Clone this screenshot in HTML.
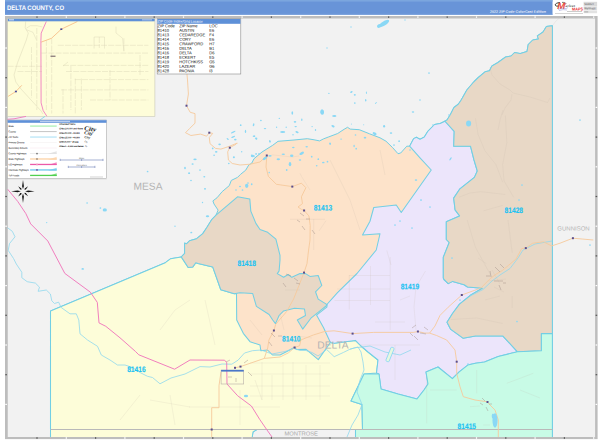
<!DOCTYPE html>
<html><head><meta charset="utf-8"><style>
html,body{margin:0;padding:0;background:#fff;width:600px;height:440px;overflow:hidden}
svg{position:absolute;left:0;top:0;font-family:"Liberation Sans",sans-serif}
text{text-rendering:geometricPrecision}
</style></head><body>
<svg width="600" height="440" viewBox="0 0 600 440">
<rect x="5" y="16" width="592" height="423" fill="#bdbdbd"/>
<rect x="7.5" y="18.3" width="588" height="418.7" fill="#f2f2f2"/>
<path d="M552.4,25.7 L552.4,438.5 L355.5,438.5 L355.5,429.5 L257,429.5 L253,432 L252,438.5 L50.5,438.5 L50.5,311 L165.3,262.7 L170.7,258.7 L181.2,257 L184.6,253.4 L184.6,243.1 L186.4,243.8 L189.4,240.8 L196.6,238.7 L202.7,233.6 L206.8,227.5 L211.9,219.3 L216,215.2 L218.1,210.1 L214,204 L212.9,200.9 L217,197.8 L222.1,191.7 L229.3,185.6 L231.3,180.4 L237.5,177.4 L240.6,174.3 L245.7,170.2 L248.7,165.1 L251.8,163.1 L254,158.7 L262,152 L272.7,145.3 L278,141.3 L294,140 L307.3,138.7 L314.1,139.8 L319.6,140.9 L323.7,138.8 L328.2,137.1 L337.7,133.5 L341,131.3 L344.1,129.3 L347.5,127.3 L350.2,129.1 L359.3,129.7 L369.5,133.8 L380,137.8 L386,141.2 L392.7,147.7 L398,153.7 L400.7,153 L406.8,146.2 L409.6,146.2 L413.7,138.6 L416.4,137.3 L420,139.3 L424.3,137 L427.7,131.4 L434.5,124.5 L440.2,123.4 L444.8,121.1 L447,120 L450.5,114.3 L453.9,107.5 L458.4,104 L460.7,100.7 L462.3,98 L466.8,90 L473.6,82 L478.2,77.5 L485,71.8 L489.5,70.7 L491.8,66 L497.5,62.7 L505.5,57 L511,56 L514.5,52.5 L520.2,53.6 L527,51.4 L528.2,44.5 L532.7,40 L538.4,38.9 L537.3,35.9 L543,32 L546.4,26.4 Z" fill="#fde3ca" stroke="#72cfe4" stroke-width="1"/>
<path d="M50.5,438.5 L50.5,311 L165.3,262.7 L170.7,258.7 L181.2,257 L188.2,267.5 L192.8,266.9 L195.8,262.8 L198,263.6 L212.7,266.9 L220.8,289.7 L234.3,293.8 L236.5,293.6 L236.7,320 L243.3,333.3 L250,341.7 L260,345 L260.8,350.8 L267.5,350 L272.5,355 L280,355 L288.3,350.8 L294.2,347.5 L296.7,349.6 L305.8,349.2 L318.3,359.6 L330.4,342.5 L334.2,343.3 L343.3,342 L355.4,340.4 L361,346 L368,352 L378,360 L376.5,373 L364,374 L351,401 L362,404.5 L362.5,429.5 L257,429.5 L253,432 L252,438.5 Z" fill="#fdfdd9" stroke="#72cfe4" stroke-width="1.05" stroke-linejoin="round"/>
<path d="M181.2,256.8 L184.6,253.4 L184.6,243.1 L186.4,243.8 L189.4,240.8 L196.6,238.7 L202.7,233.6 L206.8,227.5 L211.9,219.3 L216,215.2 L237.5,196.8 L249.8,198.9 L250.8,211.1 L255.9,223.4 L260,229.5 L267.7,232.3 L275.9,239.1 L280,255.4 L280,260 L279.1,270.9 L277.3,273.6 L283.6,277.3 L288.2,274.5 L291.8,277.3 L300,273.6 L305.5,273.6 L310,276.4 L318.2,275.5 L321.8,285.5 L315.5,291.8 L318.2,299.1 L325.5,303.6 L327.3,305 L320,310.9 L310.9,318.2 L302.7,329.1 L297.3,320 L305.5,315.5 L304.5,309.1 L294.5,308.2 L283.6,310.9 L279.1,315.5 L275.5,323.6 L272.7,320 L269.1,314.5 L256.4,306.4 L252.7,293.6 L240,292.7 L234.3,293.8 L220.8,289.7 L212.7,266.9 L198,263.6 L195.8,262.8 L192.8,266.9 L188.2,267.5 Z" fill="#e8d8c6" stroke="#72cfe4" stroke-width="1.05" stroke-linejoin="round"/>
<path d="M409.6,146.2 L413.7,138.6 L416.4,137.3 L420,139.3 L424.3,137 L427.7,131.4 L434.5,124.5 L440.2,123.4 L445.5,121.1 L454.2,131.4 L453.7,146.2 L470.5,146.2 L474,160 L477.3,171 L474.4,177.4 L459.6,189.2 L453.7,198.1 L455.1,209.9 L459.6,215.9 L446.3,221.8 L446.3,239.5 L449.2,242.5 L443.3,257.3 L443.3,278 L444,279.5 L448.2,283.6 L452.7,281.4 L464.1,284.8 L467.5,287 L482.3,288.2 L470.9,295 L459.5,304.1 L452.7,313.2 L447,322.3 L450.5,329.1 L463,338.2 L475.5,335.9 L502.7,335.9 L517.5,351.8 L498.2,356.4 L484.5,362 L475.5,363.2 L467.8,365.1 L459.2,371.9 L452.4,378.7 L438,367 L426,372 L428,384 L424,390 L417,399 L398,394 L381,389 L379,374 L376.5,373 L378,360 L368,352 L361,346 L355.4,340.4 L343.3,342 L334.2,343.3 L330.4,342.5 L323.6,327.8 L316.5,315.1 L326.8,307.2 L327.3,304 L337.5,292.6 L357,273.5 L376.25,250 L380,233.75 L362.5,235 L370,221.25 L373.75,207.5 L396.25,205 L401.25,212.5 L431.25,170 L420,157.8 Z" fill="#ece5fb" stroke="#72cfe4" stroke-width="1.05" stroke-linejoin="round"/>
<path d="M444.8,121.1 L447,120 L450.5,114.3 L453.9,107.5 L458.4,104 L460.7,100.7 L462.3,98 L466.8,90 L473.6,82 L478.2,77.5 L485,71.8 L489.5,70.7 L491.8,66 L497.5,62.7 L505.5,57 L511,56 L514.5,52.5 L520.2,53.6 L527,51.4 L528.2,44.5 L532.7,40 L538.4,38.9 L537.3,35.9 L543,32 L546.4,26.4 L552.4,25.7 L552.4,333.6 L541.4,333.6 L541.4,350.7 L517.5,351.8 L502.7,335.9 L475.5,335.9 L463,338.2 L450.5,329.1 L447,322.3 L452.7,313.2 L459.5,304.1 L470.9,295 L482.3,288.2 L467.5,287 L464.1,284.8 L452.7,281.4 L448.2,283.6 L444,279.5 L443.3,278 L443.3,257.3 L449.2,242.5 L446.3,239.5 L446.3,221.8 L459.6,215.9 L455.1,209.9 L453.7,198.1 L459.6,189.2 L474.4,177.4 L477.3,171 L474,160 L470.5,146.2 L453.7,146.2 L454.2,131.4 Z" fill="#e8d8c6" stroke="#72cfe4" stroke-width="1.05" stroke-linejoin="round"/>
<path d="M552.4,333.6 L552.4,438.5 L355.5,438.5 L355.5,429.5 L362.5,429.5 L362,404.5 L351,401 L364,374 L379,374 L381,389 L398,394 L417,399 L424,390 L428,384 L426,372 L438,367 L452.4,378.7 L459.2,371.9 L467.8,365.1 L475.5,363.2 L484.5,362 L498.2,356.4 L517.5,351.8 L541.4,350.7 L541.4,333.6 Z" fill="#c8fbe6" stroke="#72cfe4" stroke-width="1.05" stroke-linejoin="round"/>
<line x1="50.5" y1="429.5" x2="552.4" y2="429.5" stroke="#b9b9b9" stroke-width="1"/>
<path d="M6.8,227.2 L12.3,231.3 L15,236.8 L9.5,243.6 L8.2,250.4 L13.6,258.6 L16.3,264 L21.8,272.2 L21.8,277.7 L27.2,281.7 L35.4,283.1 L39.5,287.2 L38.1,291.3 L46.3,290 L50.4,294 L51.8,300.8 L54.5,303.5 L58.6,302.2 L61.3,307.6 L70,313.8 L76.3,313.8 L78.8,320 L80,333.8 L87.5,340 L97.5,346.3 L101.3,355 L110,360 L117.5,365 L125,365 L132.5,367.5 L140,372.5 L147.5,376.3 L152.5,377.5 L160,383.8 L171,378 L185,374 L200,366.6 L210,367 L222,364 L231.8,364.2 L238,360.2 L244.5,353 L252.5,350.7 L261.2,350 L272,354 L285,351.5 L294,348.5 L300,350.5 L306,350.5 L312,352.5 L318,356 L326.7,349.5 L334.2,356.7 L343.3,352.5 L350,349.2 L355,347.7 L362,347 L370,346 L385,352 L400,355 L411,350" fill="none" stroke="#8fd8ee" stroke-width="0.8"/>
<path d="M470,296 L483,289.5 L492,281 L500,275 L510,268.5 L518,258 L523,250 L535,244 L552,241" fill="none" stroke="#8fd8ee" stroke-width="0.8"/>
<path d="M350,349.2 L358,347 L361,352 L363,362 L364,370 L360,380 L357,392 L362,404.5 L358,415 L352,425 L347,437" fill="none" stroke="#8fd8ee" stroke-width="0.8"/>
<path d="M271.8,154.8 L292.3,157 L299,156" fill="none" stroke="#bfb0a8" stroke-width="0.4" opacity="0.4"/>
<path d="M490,67.5 L492,75 L500,84 L510,90 L513,93 L530,97 L547.5,102.5 L550,98" fill="none" stroke="#bfb0a8" stroke-width="0.4" opacity="0.4"/>
<path d="M512,94 L511,100 L505,108 L502,115" fill="none" stroke="#bfb0a8" stroke-width="0.4" opacity="0.4"/>
<path d="M503,110 L500,120 L498,130" fill="none" stroke="#bfb0a8" stroke-width="0.4" opacity="0.4"/>
<path d="M505.4,115.4 L506.8,142.7 L502.7,164.5 L504,180.8 L513.6,197.2" fill="none" stroke="#bfb0a8" stroke-width="0.4" opacity="0.4"/>
<path d="M475.4,118.2 L478.1,134.5 L485,150.9 L495.9,164.5 L502.7,182.2" fill="none" stroke="#bfb0a8" stroke-width="0.4" opacity="0.4"/>
<path d="M459,197.2 L470,193 L480.9,191.7 L505.4,194.5" fill="none" stroke="#bfb0a8" stroke-width="0.4" opacity="0.4"/>
<path d="M483.6,210.8 L502.7,205.4" fill="none" stroke="#bfb0a8" stroke-width="0.4" opacity="0.4"/>
<path d="M467.2,220 L475.4,247.2 L491.8,277.2" fill="none" stroke="#bfb0a8" stroke-width="0.4" opacity="0.4"/>
<path d="M508,220 L512.2,252.7" fill="none" stroke="#bfb0a8" stroke-width="0.4" opacity="0.4"/>
<path d="M478,258 L486.3,263.6" fill="none" stroke="#bfb0a8" stroke-width="0.4" opacity="0.4"/>
<path d="M512.2,296 L512.2,308" fill="none" stroke="#bfb0a8" stroke-width="0.4" opacity="0.4"/>
<path d="M451,319.5 L476.8,318 L502.7,323.5" fill="none" stroke="#bfb0a8" stroke-width="0.4" opacity="0.4"/>
<path d="M492,270 L500,284" fill="none" stroke="#bfb0a8" stroke-width="0.4" opacity="0.4"/>
<path d="M488,281 L506,279" fill="none" stroke="#bfb0a8" stroke-width="0.4" opacity="0.4"/>
<path d="M494,287 L504,292" fill="none" stroke="#bfb0a8" stroke-width="0.4" opacity="0.4"/>
<path d="M485,300 L500,296" fill="none" stroke="#bfb0a8" stroke-width="0.4" opacity="0.4"/>
<path d="M390.2,257 L390.2,330" fill="none" stroke="#bfb0a8" stroke-width="0.4" opacity="0.4"/>
<path d="M370.5,266 L370.5,305" fill="none" stroke="#bfb0a8" stroke-width="0.4" opacity="0.4"/>
<path d="M349,275.5 L390,275.5" fill="none" stroke="#bfb0a8" stroke-width="0.4" opacity="0.4"/>
<path d="M337,289 L390,289" fill="none" stroke="#bfb0a8" stroke-width="0.4" opacity="0.4"/>
<path d="M334.5,300.5 L390,300.5" fill="none" stroke="#bfb0a8" stroke-width="0.4" opacity="0.4"/>
<path d="M349.3,275 L349.3,309.5" fill="none" stroke="#bfb0a8" stroke-width="0.4" opacity="0.4"/>
<path d="M386.8,250.5 L391,265" fill="none" stroke="#bfb0a8" stroke-width="0.4" opacity="0.4"/>
<path d="M375,322 L405,322" fill="none" stroke="#bfb0a8" stroke-width="0.4" opacity="0.4"/>
<path d="M425.5,271 L416,287 L414,307 L416,330" fill="none" stroke="#bfb0a8" stroke-width="0.4" opacity="0.4"/>
<path d="M400,300 L410,296" fill="none" stroke="#bfb0a8" stroke-width="0.4" opacity="0.4"/>
<path d="M395,345 L395,380" fill="none" stroke="#bfb0a8" stroke-width="0.4" opacity="0.4"/>
<path d="M360,345 L420,345" fill="none" stroke="#bfb0a8" stroke-width="0.4" opacity="0.4"/>
<path d="M426.7,376.7 L426.7,423.3" fill="none" stroke="#bfb0a8" stroke-width="0.4" opacity="0.4"/>
<path d="M430,390 L456.7,390" fill="none" stroke="#bfb0a8" stroke-width="0.4" opacity="0.4"/>
<path d="M476.7,370 L476.7,393.3" fill="none" stroke="#bfb0a8" stroke-width="0.4" opacity="0.4"/>
<path d="M506.7,383.3 L533.3,373.3" fill="none" stroke="#bfb0a8" stroke-width="0.4" opacity="0.4"/>
<path d="M470,406.7 L480,406" fill="none" stroke="#bfb0a8" stroke-width="0.4" opacity="0.4"/>
<path d="M483.3,425 L490,425" fill="none" stroke="#bfb0a8" stroke-width="0.4" opacity="0.4"/>
<path d="M520,390 L540,398" fill="none" stroke="#bfb0a8" stroke-width="0.4" opacity="0.4"/>
<path d="M150,400 L190,407" fill="none" stroke="#bfb0a8" stroke-width="0.4" opacity="0.4"/>
<path d="M189,407 L280,407" fill="none" stroke="#bfb0a8" stroke-width="0.4" opacity="0.4"/>
<path d="M120,420 L140,395" fill="none" stroke="#bfb0a8" stroke-width="0.4" opacity="0.4"/>
<path d="M160,330 L175,310 L190,300" fill="none" stroke="#bfb0a8" stroke-width="0.4" opacity="0.4"/>
<path d="M205,300 L215,345" fill="none" stroke="#bfb0a8" stroke-width="0.4" opacity="0.4"/>
<path d="M240,390 L240,425" fill="none" stroke="#bfb0a8" stroke-width="0.4" opacity="0.4"/>
<path d="M255,380 L262,400" fill="none" stroke="#bfb0a8" stroke-width="0.4" opacity="0.4"/>
<path d="M170,395 L175,425" fill="none" stroke="#bfb0a8" stroke-width="0.4" opacity="0.4"/>
<path d="M290,219.3 L325,219.3" fill="none" stroke="#bfb0a8" stroke-width="0.4" opacity="0.4"/>
<path d="M313.7,219 L313.7,250" fill="none" stroke="#bfb0a8" stroke-width="0.4" opacity="0.4"/>
<path d="M319,231 L326,220.7" fill="none" stroke="#bfb0a8" stroke-width="0.4" opacity="0.4"/>
<path d="M300,173.3 L301.7,176.7 L310,190" fill="none" stroke="#bfb0a8" stroke-width="0.4" opacity="0.4"/>
<path d="M330,160 L350,200 L360,230" fill="none" stroke="#bfb0a8" stroke-width="0.4" opacity="0.4"/>
<path d="M380,150 L385,175" fill="none" stroke="#bfb0a8" stroke-width="0.4" opacity="0.4"/>
<path d="M285,290 L300,290" fill="none" stroke="#bfb0a8" stroke-width="0.4" opacity="0.4"/>
<path d="M262,362 L262,400" fill="none" stroke="#bfb0a8" stroke-width="0.4" opacity="0.4"/>
<path d="M272,375 L272,400" fill="none" stroke="#bfb0a8" stroke-width="0.4" opacity="0.4"/>
<path d="M283,362 L283,400" fill="none" stroke="#bfb0a8" stroke-width="0.4" opacity="0.4"/>
<path d="M293,362 L293,400" fill="none" stroke="#bfb0a8" stroke-width="0.4" opacity="0.4"/>
<path d="M306,365 L306,400" fill="none" stroke="#bfb0a8" stroke-width="0.4" opacity="0.4"/>
<path d="M320,365 L320,400" fill="none" stroke="#bfb0a8" stroke-width="0.4" opacity="0.4"/>
<path d="M250,363 L330,363" fill="none" stroke="#bfb0a8" stroke-width="0.4" opacity="0.4"/>
<path d="M250,374 L330,374" fill="none" stroke="#bfb0a8" stroke-width="0.4" opacity="0.4"/>
<path d="M250,386 L330,386" fill="none" stroke="#bfb0a8" stroke-width="0.4" opacity="0.4"/>
<path d="M250,396 L330,396" fill="none" stroke="#bfb0a8" stroke-width="0.4" opacity="0.4"/>
<path d="M250,320 L262,335" fill="none" stroke="#bfb0a8" stroke-width="0.4" opacity="0.4"/>
<path d="M280,313.3 L284,330" fill="none" stroke="#bfb0a8" stroke-width="0.4" opacity="0.4"/>
<path d="M297,336 L312,338" fill="none" stroke="#bfb0a8" stroke-width="0.4" opacity="0.4"/>
<path d="M552.4,25.7 L556,21 L560,17.5" fill="none" stroke="#bfb0a8" stroke-width="0.4" opacity="0.4"/>
<path d="M186.9,73.5 L187.5,80 L188.4,94 L186.5,105.7 L190.2,112.3 L195,113.6 L195,123.2 L189.5,128.6 L185.5,132.7 L190.9,135.5 L200.5,134.1 L206.6,136.2 L209.3,132.7 L212.7,133.4 L209.3,137.5 L210,143.7 L215.5,148.4 L220.9,149.1 L229.1,146.4 L237.3,143 L236,144.3 L229.8,147.7 L227.7,151.8 L228.4,160 L232.3,163.5 L240,165 L250,164.2 L260,162 L266.8,155.5 L266,167 L268.4,176.4 L276.4,184.3 L292.3,186.6 L301.4,183.2 L305.9,187.7 L301.4,196.8 L302.5,203.6 L298,207 L301.4,209.3 L304.1,210.5 L308.9,215.9 L310.2,225.5 L310,240 L308.6,250 L307,263.6 L304,272.6 L299,285.4 L293.6,299 L286.8,311.3 L275.7,324.3 L273.9,330.5 L268.9,340 L267.7,348 L264.3,358.4" fill="none" stroke="#f6c99c" stroke-width="0.9" stroke-linejoin="round"/>
<path d="M219,407.7 L219,385.6 L221,372" fill="none" stroke="#f6c99c" stroke-width="0.9" stroke-linejoin="round"/>
<path d="M211.7,437 L211.7,407.7 L219,407.7" fill="none" stroke="#f6c99c" stroke-width="0.9" stroke-linejoin="round"/>
<path d="M235,367.8 L240.5,366.6 L264.3,358.4 L280,357 L288.3,352.9 L294.6,347.5 L299.6,345.8 L300.8,340 L305,338.3 L313.3,335 L324.5,331.5 L334,330.8 L352.6,333.6 L373.6,332.4 L413.2,332.4 L417.9,331.5 L424.9,333.1 L429.6,333.1 L435,326 L440,315.4 L448.2,307.2 L461.8,295 L480.9,288 L490.3,278.5 L496.5,273.9 L502.6,270.3 L508.7,265.2 L515.9,259.1 L521.7,248.6 L525.8,248.1 L532.6,243.2 L543.5,241.8 L551.7,245.9 L560,243.2 L572.9,238.2 L593.3,240" fill="none" stroke="#f6c99c" stroke-width="0.9" stroke-linejoin="round"/>
<path d="M429.6,333.1 L436.6,335.5 L446.7,340 L455,350 L456.7,361.7 L456.7,373.3 L460,386.7 L463.3,396.7 L475,400 L486.7,401.7 L495,410 L498.3,420 L498.3,437" fill="none" stroke="#f6c99c" stroke-width="0.9" stroke-linejoin="round"/>
<path d="M7.5,189.1 L17.7,201.4 L25.9,213.7 L30.7,223.9 L47.8,241 L64.8,273.4 L90.4,292.2 L97.3,302.4 L99,322.9 L105.8,326.3 L120,337.8 L135.4,351.4 L138.8,354.8 L174.6,369.2 L190,360 L224.6,360.2 L226.7,362.6 L227,384 L237.7,395.8 L251.4,406 L259.9,419.7 L267,430 L272,437" fill="none" stroke="#f078bc" stroke-width="0.95" stroke-linejoin="round"/>
<rect x="388.3" y="347" width="3.4" height="15" rx="1" fill="#e6f8e0" stroke="#7fd3f3" stroke-width="0.7" transform="rotate(22 390 354.5)"/>
<rect x="221.1" y="370.5" width="22.6" height="13.5" fill="none" stroke="#b8b0a8" stroke-width="0.6"/>
<line x1="221.1" y1="370.7" x2="243.7" y2="370.7" stroke="#4b77c8" stroke-width="1.8"/>
<ellipse cx="384" cy="23.5" rx="5.95" ry="2.21" fill="#8ad8f5" transform="rotate(-32 384 23.5)"/>
<ellipse cx="379" cy="26" rx="2.12" ry="1.70" fill="#8ad8f5" transform="rotate(-30 379 26)"/>
<ellipse cx="233.2" cy="132.1" rx="2.55" ry="0.68" fill="#8ad8f5" transform="rotate(-25 233.2 132.1)"/>
<ellipse cx="233.2" cy="136.8" rx="2.12" ry="0.68" fill="#8ad8f5" transform="rotate(-25 233.2 136.8)"/>
<ellipse cx="235.3" cy="139.6" rx="1.27" ry="0.85" fill="#8ad8f5" transform="rotate(0 235.3 139.6)"/>
<ellipse cx="227.7" cy="138.9" rx="1.27" ry="0.68" fill="#8ad8f5" transform="rotate(40 227.7 138.9)"/>
<ellipse cx="219.6" cy="144.3" rx="1.27" ry="0.85" fill="#8ad8f5" transform="rotate(0 219.6 144.3)"/>
<ellipse cx="212.7" cy="148.4" rx="0.85" ry="0.85" fill="#8ad8f5" transform="rotate(0 212.7 148.4)"/>
<ellipse cx="216.2" cy="151.8" rx="1.27" ry="0.85" fill="#8ad8f5" transform="rotate(0 216.2 151.8)"/>
<ellipse cx="214.1" cy="155.3" rx="0.85" ry="0.68" fill="#8ad8f5" transform="rotate(0 214.1 155.3)"/>
<ellipse cx="240.7" cy="125.2" rx="0.85" ry="0.85" fill="#8ad8f5" transform="rotate(0 240.7 125.2)"/>
<ellipse cx="245.5" cy="131.4" rx="0.68" ry="1.70" fill="#8ad8f5" transform="rotate(0 245.5 131.4)"/>
<ellipse cx="253.7" cy="124.6" rx="0.68" ry="1.27" fill="#8ad8f5" transform="rotate(0 253.7 124.6)"/>
<ellipse cx="254.4" cy="136.2" rx="0.85" ry="0.85" fill="#8ad8f5" transform="rotate(0 254.4 136.2)"/>
<ellipse cx="256.4" cy="138.9" rx="0.85" ry="0.85" fill="#8ad8f5" transform="rotate(0 256.4 138.9)"/>
<ellipse cx="195" cy="159.3" rx="1.70" ry="0.85" fill="#8ad8f5" transform="rotate(0 195 159.3)"/>
<ellipse cx="233.9" cy="157.3" rx="1.02" ry="1.02" fill="#8ad8f5" transform="rotate(0 233.9 157.3)"/>
<ellipse cx="253.7" cy="156" rx="1.27" ry="0.85" fill="#8ad8f5" transform="rotate(0 253.7 156)"/>
<ellipse cx="259" cy="153.9" rx="0.85" ry="0.85" fill="#8ad8f5" transform="rotate(0 259 153.9)"/>
<ellipse cx="192.6" cy="164" rx="1.02" ry="0.85" fill="#8ad8f5" transform="rotate(0 192.6 164)"/>
<ellipse cx="189.1" cy="173.2" rx="1.02" ry="0.85" fill="#8ad8f5" transform="rotate(0 189.1 173.2)"/>
<ellipse cx="204.3" cy="176.7" rx="1.02" ry="0.68" fill="#8ad8f5" transform="rotate(0 204.3 176.7)"/>
<ellipse cx="228.8" cy="163.5" rx="0.85" ry="0.68" fill="#8ad8f5" transform="rotate(0 228.8 163.5)"/>
<ellipse cx="185" cy="168" rx="0.85" ry="1.27" fill="#8ad8f5" transform="rotate(0 185 168)"/>
<ellipse cx="200" cy="170" rx="0.85" ry="0.85" fill="#8ad8f5" transform="rotate(0 200 170)"/>
<ellipse cx="322.3" cy="112.3" rx="1.70" ry="2.55" fill="#8ad8f5" transform="rotate(0 322.3 112.3)"/>
<ellipse cx="292.3" cy="113" rx="0.85" ry="1.70" fill="#8ad8f5" transform="rotate(0 292.3 113)"/>
<ellipse cx="279.3" cy="118.4" rx="0.68" ry="0.68" fill="#8ad8f5" transform="rotate(0 279.3 118.4)"/>
<ellipse cx="260.9" cy="120.5" rx="0.85" ry="0.68" fill="#8ad8f5" transform="rotate(0 260.9 120.5)"/>
<ellipse cx="253.4" cy="125.2" rx="0.68" ry="1.02" fill="#8ad8f5" transform="rotate(0 253.4 125.2)"/>
<ellipse cx="265" cy="128.6" rx="1.27" ry="0.68" fill="#8ad8f5" transform="rotate(0 265 128.6)"/>
<ellipse cx="276.6" cy="127.3" rx="0.68" ry="0.68" fill="#8ad8f5" transform="rotate(0 276.6 127.3)"/>
<ellipse cx="286.2" cy="127.3" rx="0.68" ry="0.68" fill="#8ad8f5" transform="rotate(0 286.2 127.3)"/>
<ellipse cx="295" cy="121.8" rx="1.27" ry="0.85" fill="#8ad8f5" transform="rotate(0 295 121.8)"/>
<ellipse cx="301.8" cy="119.8" rx="0.68" ry="1.27" fill="#8ad8f5" transform="rotate(0 301.8 119.8)"/>
<ellipse cx="295.7" cy="126.6" rx="1.27" ry="0.68" fill="#8ad8f5" transform="rotate(0 295.7 126.6)"/>
<ellipse cx="282.7" cy="132.1" rx="2.55" ry="1.02" fill="#8ad8f5" transform="rotate(0 282.7 132.1)"/>
<ellipse cx="297" cy="132.1" rx="1.70" ry="0.85" fill="#8ad8f5" transform="rotate(20 297 132.1)"/>
<ellipse cx="312.1" cy="126.6" rx="0.68" ry="0.68" fill="#8ad8f5" transform="rotate(0 312.1 126.6)"/>
<ellipse cx="315.5" cy="130" rx="0.68" ry="1.02" fill="#8ad8f5" transform="rotate(0 315.5 130)"/>
<ellipse cx="293" cy="134.8" rx="0.68" ry="0.68" fill="#8ad8f5" transform="rotate(0 293 134.8)"/>
<ellipse cx="256.1" cy="138.2" rx="1.27" ry="0.68" fill="#8ad8f5" transform="rotate(0 256.1 138.2)"/>
<ellipse cx="253.4" cy="136.2" rx="0.68" ry="0.68" fill="#8ad8f5" transform="rotate(0 253.4 136.2)"/>
<ellipse cx="269.8" cy="140.9" rx="0.68" ry="1.02" fill="#8ad8f5" transform="rotate(0 269.8 140.9)"/>
<ellipse cx="252.7" cy="155.9" rx="1.27" ry="1.27" fill="#8ad8f5" transform="rotate(0 252.7 155.9)"/>
<ellipse cx="256.1" cy="153.9" rx="0.85" ry="0.85" fill="#8ad8f5" transform="rotate(0 256.1 153.9)"/>
<ellipse cx="251.7" cy="155.8" rx="0.85" ry="1.27" fill="#8ad8f5" transform="rotate(0 251.7 155.8)"/>
<ellipse cx="241.7" cy="151.7" rx="0.68" ry="0.68" fill="#8ad8f5" transform="rotate(0 241.7 151.7)"/>
<ellipse cx="270" cy="141.7" rx="0.85" ry="0.85" fill="#8ad8f5" transform="rotate(0 270 141.7)"/>
<ellipse cx="351.4" cy="92" rx="1.27" ry="0.85" fill="#8ad8f5" transform="rotate(-30 351.4 92)"/>
<ellipse cx="354.8" cy="94.8" rx="1.02" ry="0.85" fill="#8ad8f5" transform="rotate(0 354.8 94.8)"/>
<ellipse cx="366.4" cy="92.7" rx="0.51" ry="1.27" fill="#8ad8f5" transform="rotate(0 366.4 92.7)"/>
<ellipse cx="365.7" cy="100.2" rx="0.68" ry="1.27" fill="#8ad8f5" transform="rotate(0 365.7 100.2)"/>
<ellipse cx="375.9" cy="103" rx="1.27" ry="0.51" fill="#8ad8f5" transform="rotate(-45 375.9 103)"/>
<ellipse cx="354.8" cy="103" rx="0.85" ry="0.85" fill="#8ad8f5" transform="rotate(0 354.8 103)"/>
<ellipse cx="328.9" cy="93.4" rx="0.68" ry="0.68" fill="#8ad8f5" transform="rotate(0 328.9 93.4)"/>
<ellipse cx="322" cy="111.8" rx="1.70" ry="2.55" fill="#8ad8f5" transform="rotate(0 322 111.8)"/>
<ellipse cx="334.3" cy="115.9" rx="2.12" ry="1.02" fill="#8ad8f5" transform="rotate(0 334.3 115.9)"/>
<ellipse cx="333" cy="126.2" rx="1.70" ry="1.02" fill="#8ad8f5" transform="rotate(20 333 126.2)"/>
<ellipse cx="384.1" cy="126.2" rx="1.02" ry="1.27" fill="#8ad8f5" transform="rotate(0 384.1 126.2)"/>
<ellipse cx="374.6" cy="133.7" rx="2.12" ry="1.27" fill="#8ad8f5" transform="rotate(30 374.6 133.7)"/>
<ellipse cx="399.1" cy="141.2" rx="0.85" ry="0.85" fill="#8ad8f5" transform="rotate(0 399.1 141.2)"/>
<ellipse cx="363.7" cy="124.8" rx="0.51" ry="0.51" fill="#8ad8f5" transform="rotate(0 363.7 124.8)"/>
<ellipse cx="351.4" cy="124.1" rx="0.51" ry="0.51" fill="#8ad8f5" transform="rotate(0 351.4 124.1)"/>
<ellipse cx="351" cy="27" rx="0.68" ry="0.68" fill="#8ad8f5" transform="rotate(0 351 27)"/>
<ellipse cx="327" cy="48" rx="0.68" ry="0.68" fill="#8ad8f5" transform="rotate(0 327 48)"/>
<ellipse cx="413" cy="112" rx="1.27" ry="0.68" fill="#8ad8f5" transform="rotate(0 413 112)"/>
<ellipse cx="420" cy="100" rx="0.85" ry="0.68" fill="#8ad8f5" transform="rotate(0 420 100)"/>
<ellipse cx="429" cy="73" rx="0.85" ry="0.85" fill="#8ad8f5" transform="rotate(0 429 73)"/>
<ellipse cx="405" cy="20" rx="0.68" ry="0.68" fill="#8ad8f5" transform="rotate(0 405 20)"/>
<ellipse cx="433" cy="125" rx="0.85" ry="0.68" fill="#8ad8f5" transform="rotate(0 433 125)"/>
<ellipse cx="449" cy="115" rx="0.85" ry="0.68" fill="#8ad8f5" transform="rotate(0 449 115)"/>
<ellipse cx="265" cy="158.3" rx="2.55" ry="1.27" fill="#8ad8f5" transform="rotate(-35 265 158.3)"/>
<ellipse cx="270" cy="155.8" rx="1.70" ry="0.85" fill="#8ad8f5" transform="rotate(0 270 155.8)"/>
<ellipse cx="278.3" cy="159.2" rx="1.70" ry="1.02" fill="#8ad8f5" transform="rotate(0 278.3 159.2)"/>
<ellipse cx="283.3" cy="154.2" rx="1.70" ry="0.68" fill="#8ad8f5" transform="rotate(0 283.3 154.2)"/>
<ellipse cx="291.7" cy="155.8" rx="1.70" ry="1.27" fill="#8ad8f5" transform="rotate(0 291.7 155.8)"/>
<ellipse cx="301.7" cy="153.3" rx="2.55" ry="1.27" fill="#8ad8f5" transform="rotate(-30 301.7 153.3)"/>
<ellipse cx="290" cy="164.2" rx="1.27" ry="2.12" fill="#8ad8f5" transform="rotate(0 290 164.2)"/>
<ellipse cx="286.7" cy="170" rx="0.85" ry="1.02" fill="#8ad8f5" transform="rotate(0 286.7 170)"/>
<ellipse cx="300" cy="160" rx="1.27" ry="0.68" fill="#8ad8f5" transform="rotate(0 300 160)"/>
<ellipse cx="306.7" cy="146.7" rx="1.27" ry="0.68" fill="#8ad8f5" transform="rotate(0 306.7 146.7)"/>
<ellipse cx="293.3" cy="147.5" rx="1.27" ry="0.68" fill="#8ad8f5" transform="rotate(0 293.3 147.5)"/>
<ellipse cx="318.3" cy="159.2" rx="0.85" ry="0.85" fill="#8ad8f5" transform="rotate(0 318.3 159.2)"/>
<ellipse cx="323.3" cy="162.5" rx="1.27" ry="0.85" fill="#8ad8f5" transform="rotate(0 323.3 162.5)"/>
<ellipse cx="327.5" cy="161.7" rx="0.85" ry="0.85" fill="#8ad8f5" transform="rotate(0 327.5 161.7)"/>
<ellipse cx="316.7" cy="165.8" rx="0.85" ry="0.68" fill="#8ad8f5" transform="rotate(0 316.7 165.8)"/>
<ellipse cx="330" cy="143.3" rx="0.85" ry="0.85" fill="#8ad8f5" transform="rotate(0 330 143.3)"/>
<ellipse cx="311.7" cy="156.7" rx="0.85" ry="0.85" fill="#8ad8f5" transform="rotate(0 311.7 156.7)"/>
<ellipse cx="269.2" cy="172.5" rx="0.68" ry="0.85" fill="#8ad8f5" transform="rotate(0 269.2 172.5)"/>
<ellipse cx="246.7" cy="185.8" rx="1.70" ry="2.12" fill="#8ad8f5" transform="rotate(0 246.7 185.8)"/>
<ellipse cx="251.7" cy="184.2" rx="0.85" ry="1.02" fill="#8ad8f5" transform="rotate(0 251.7 184.2)"/>
<ellipse cx="242.5" cy="190" rx="0.85" ry="0.85" fill="#8ad8f5" transform="rotate(0 242.5 190)"/>
<ellipse cx="355.5" cy="135" rx="0.85" ry="0.68" fill="#8ad8f5" transform="rotate(0 355.5 135)"/>
<ellipse cx="341.1" cy="139.1" rx="0.85" ry="0.68" fill="#8ad8f5" transform="rotate(0 341.1 139.1)"/>
<ellipse cx="330.2" cy="143.9" rx="0.85" ry="0.85" fill="#8ad8f5" transform="rotate(0 330.2 143.9)"/>
<ellipse cx="354.1" cy="146" rx="0.68" ry="1.27" fill="#8ad8f5" transform="rotate(0 354.1 146)"/>
<ellipse cx="356.2" cy="148.7" rx="0.85" ry="0.85" fill="#8ad8f5" transform="rotate(0 356.2 148.7)"/>
<ellipse cx="365" cy="137.7" rx="1.27" ry="0.85" fill="#8ad8f5" transform="rotate(0 365 137.7)"/>
<ellipse cx="391" cy="133" rx="1.27" ry="0.85" fill="#8ad8f5" transform="rotate(0 391 133)"/>
<ellipse cx="394" cy="145" rx="0.85" ry="0.85" fill="#8ad8f5" transform="rotate(0 394 145)"/>
<ellipse cx="410" cy="150" rx="0.85" ry="0.68" fill="#8ad8f5" transform="rotate(0 410 150)"/>
<ellipse cx="416" cy="180" rx="1.27" ry="0.85" fill="#8ad8f5" transform="rotate(0 416 180)"/>
<ellipse cx="421" cy="200" rx="1.02" ry="0.85" fill="#8ad8f5" transform="rotate(0 421 200)"/>
<ellipse cx="430" cy="207" rx="0.85" ry="0.85" fill="#8ad8f5" transform="rotate(0 430 207)"/>
<ellipse cx="395" cy="225" rx="0.85" ry="0.85" fill="#8ad8f5" transform="rotate(0 395 225)"/>
<ellipse cx="452" cy="258" rx="0.85" ry="0.85" fill="#8ad8f5" transform="rotate(0 452 258)"/>
<ellipse cx="400" cy="221" rx="0.85" ry="0.85" fill="#8ad8f5" transform="rotate(0 400 221)"/>
<ellipse cx="412" cy="228" rx="0.85" ry="0.85" fill="#8ad8f5" transform="rotate(0 412 228)"/>
<ellipse cx="468.6" cy="123.6" rx="2.55" ry="2.98" fill="#8ad8f5" transform="rotate(0 468.6 123.6)"/>
<ellipse cx="450.5" cy="158.8" rx="1.87" ry="0.68" fill="#8ad8f5" transform="rotate(-55 450.5 158.8)"/>
<ellipse cx="519" cy="200" rx="0.85" ry="0.85" fill="#8ad8f5" transform="rotate(0 519 200)"/>
<ellipse cx="522" cy="185" rx="0.85" ry="0.85" fill="#8ad8f5" transform="rotate(0 522 185)"/>
<ellipse cx="580" cy="120" rx="0.85" ry="0.85" fill="#8ad8f5" transform="rotate(0 580 120)"/>
<ellipse cx="590" cy="245" rx="0.85" ry="0.85" fill="#8ad8f5" transform="rotate(0 590 245)"/>
<ellipse cx="517" cy="321.5" rx="0.85" ry="0.85" fill="#8ad8f5" transform="rotate(0 517 321.5)"/>
<ellipse cx="246" cy="396" rx="2.12" ry="1.27" fill="#8ad8f5" transform="rotate(0 246 396)"/>
<ellipse cx="495" cy="420.5" rx="2.55" ry="7.22" fill="#8ad8f5" transform="rotate(0 495 420.5)"/>
<ellipse cx="493" cy="416" rx="1.27" ry="2.55" fill="#8ad8f5" transform="rotate(0 493 416)"/>
<ellipse cx="468" cy="364" rx="0.85" ry="0.85" fill="#8ad8f5" transform="rotate(0 468 364)"/>
<ellipse cx="460" cy="300" rx="0.85" ry="0.85" fill="#8ad8f5" transform="rotate(0 460 300)"/>
<ellipse cx="104.8" cy="209.9" rx="2.12" ry="1.70" fill="#8ad8f5" transform="rotate(0 104.8 209.9)"/>
<ellipse cx="191" cy="180.5" rx="0.85" ry="0.68" fill="#8ad8f5" transform="rotate(0 191 180.5)"/>
<ellipse cx="205" cy="188.8" rx="1.02" ry="0.85" fill="#8ad8f5" transform="rotate(0 205 188.8)"/>
<ellipse cx="202.5" cy="202.5" rx="0.68" ry="0.68" fill="#8ad8f5" transform="rotate(0 202.5 202.5)"/>
<ellipse cx="207.5" cy="216.3" rx="1.70" ry="1.02" fill="#8ad8f5" transform="rotate(0 207.5 216.3)"/>
<ellipse cx="175" cy="226.3" rx="0.68" ry="0.68" fill="#8ad8f5" transform="rotate(0 175 226.3)"/>
<ellipse cx="191.3" cy="232.5" rx="1.02" ry="0.85" fill="#8ad8f5" transform="rotate(0 191.3 232.5)"/>
<ellipse cx="236" cy="190" rx="0.85" ry="0.68" fill="#8ad8f5" transform="rotate(0 236 190)"/>
<ellipse cx="240" cy="186.5" rx="1.02" ry="0.68" fill="#8ad8f5" transform="rotate(0 240 186.5)"/>
<ellipse cx="248" cy="183" rx="0.85" ry="0.85" fill="#8ad8f5" transform="rotate(0 248 183)"/>
<ellipse cx="100.4" cy="208" rx="0.85" ry="0.85" fill="#8ad8f5" transform="rotate(0 100.4 208)"/>
<ellipse cx="87.1" cy="203" rx="0.85" ry="0.68" fill="#8ad8f5" transform="rotate(0 87.1 203)"/>
<ellipse cx="46.7" cy="222.6" rx="0.68" ry="0.68" fill="#8ad8f5" transform="rotate(0 46.7 222.6)"/>
<ellipse cx="82.7" cy="268.9" rx="1.27" ry="0.85" fill="#8ad8f5" transform="rotate(0 82.7 268.9)"/>
<ellipse cx="147.6" cy="171.5" rx="0.85" ry="0.85" fill="#8ad8f5" transform="rotate(0 147.6 171.5)"/>
<path d="M495,267 L500,272" fill="none" stroke="#a09088" stroke-width="0.45"/>
<path d="M490,271 L491,277" fill="none" stroke="#a09088" stroke-width="0.45"/>
<path d="M494,281 L503,281" fill="none" stroke="#a09088" stroke-width="0.45"/>
<path d="M499,285 L501,290" fill="none" stroke="#a09088" stroke-width="0.45"/>
<path d="M503,283 L506,283" fill="none" stroke="#a09088" stroke-width="0.45"/>
<path d="M486,276 L490,276" fill="none" stroke="#a09088" stroke-width="0.45"/>
<path d="M500,264 L504,268" fill="none" stroke="#a09088" stroke-width="0.45"/>
<path d="M412,328 L416,325" fill="none" stroke="#a09088" stroke-width="0.45"/>
<path d="M420,333 L426,334" fill="none" stroke="#a09088" stroke-width="0.45"/>
<path d="M414,336 L418,340" fill="none" stroke="#a09088" stroke-width="0.45"/>
<path d="M424,327 L428,330" fill="none" stroke="#a09088" stroke-width="0.45"/>
<path d="M410,333 L413,336" fill="none" stroke="#a09088" stroke-width="0.45"/>
<path d="M482,398 L485,401" fill="none" stroke="#a09088" stroke-width="0.45"/>
<path d="M489,404 L492,404" fill="none" stroke="#a09088" stroke-width="0.45"/>
<path d="M486,407 L488,411" fill="none" stroke="#a09088" stroke-width="0.45"/>
<path d="M480,403 L483,405" fill="none" stroke="#a09088" stroke-width="0.45"/>
<path d="M300,213 L304,216" fill="none" stroke="#a09088" stroke-width="0.45"/>
<path d="M306,219 L310,219" fill="none" stroke="#a09088" stroke-width="0.45"/>
<path d="M302,226 L305,230" fill="none" stroke="#a09088" stroke-width="0.45"/>
<path d="M297,220 L300,222" fill="none" stroke="#a09088" stroke-width="0.45"/>
<path d="M312,230 L315,234" fill="none" stroke="#a09088" stroke-width="0.45"/>
<path d="M286,274 L291,276" fill="none" stroke="#a09088" stroke-width="0.45"/>
<path d="M296,283 L300,284" fill="none" stroke="#a09088" stroke-width="0.45"/>
<path d="M283,283 L286,287" fill="none" stroke="#a09088" stroke-width="0.45"/>
<path d="M294,278 L298,281" fill="none" stroke="#a09088" stroke-width="0.45"/>
<path d="M271,333 L275,337" fill="none" stroke="#a09088" stroke-width="0.45"/>
<path d="M269,342 L272,346" fill="none" stroke="#a09088" stroke-width="0.45"/>
<path d="M278,336 L282,336" fill="none" stroke="#a09088" stroke-width="0.45"/>
<path d="M226,362 L230,360" fill="none" stroke="#a09088" stroke-width="0.45"/>
<path d="M244,363 L248,360" fill="none" stroke="#a09088" stroke-width="0.45"/>
<path d="M228,377 L232,377" fill="none" stroke="#a09088" stroke-width="0.45"/>
<path d="M236,378 L236,382" fill="none" stroke="#a09088" stroke-width="0.45"/>
<path d="M248,372 L252,376" fill="none" stroke="#a09088" stroke-width="0.45"/>
<rect x="185.5" y="104.7" width="2" height="2" fill="#5a4d8c"/>
<rect x="208.3" y="131.7" width="2" height="2" fill="#5a4d8c"/>
<rect x="228.8" y="146.7" width="2" height="2" fill="#5a4d8c"/>
<rect x="265.8" y="154.5" width="2" height="2" fill="#5a4d8c"/>
<rect x="291.3" y="185.6" width="2" height="2" fill="#5a4d8c"/>
<rect x="303.1" y="209.5" width="2" height="2" fill="#5a4d8c"/>
<rect x="303" y="271.6" width="2" height="2" fill="#5a4d8c"/>
<rect x="272.9" y="329.5" width="2" height="2" fill="#5a4d8c"/>
<rect x="234" y="366.8" width="2" height="2" fill="#5a4d8c"/>
<rect x="239.5" y="365.6" width="2" height="2" fill="#5a4d8c"/>
<rect x="293.6" y="346.5" width="2" height="2" fill="#5a4d8c"/>
<rect x="210.7" y="428.5" width="2" height="2" fill="#5a4d8c"/>
<rect x="351.6" y="332.6" width="2" height="2" fill="#5a4d8c"/>
<rect x="416.9" y="330.5" width="2" height="2" fill="#5a4d8c"/>
<rect x="455.7" y="360.7" width="2" height="2" fill="#5a4d8c"/>
<rect x="486.5" y="401" width="2" height="2" fill="#5a4d8c"/>
<rect x="524.8" y="247.1" width="2" height="2" fill="#5a4d8c"/>
<rect x="460.8" y="294" width="2" height="2" fill="#5a4d8c"/>
<rect x="571.9" y="237.2" width="2" height="2" fill="#5a4d8c"/>
<g transform="rotate(0.06 313.70 210.60)"><text x="313.70" y="210.60" font-family="Liberation Sans" font-weight="bold" font-size="8" fill="#1ec3f2" stroke="#1ec3f2" stroke-width="0.15" textLength="18.4" lengthAdjust="spacingAndGlyphs">81413</text></g>
<g transform="rotate(0.06 237.50 265.90)"><text x="237.50" y="265.90" font-family="Liberation Sans" font-weight="bold" font-size="8" fill="#1ec3f2" stroke="#1ec3f2" stroke-width="0.15" textLength="18.4" lengthAdjust="spacingAndGlyphs">81418</text></g>
<g transform="rotate(0.06 282.10 341.40)"><text x="282.10" y="341.40" font-family="Liberation Sans" font-weight="bold" font-size="8" fill="#1ec3f2" stroke="#1ec3f2" stroke-width="0.15" textLength="18.4" lengthAdjust="spacingAndGlyphs">81410</text></g>
<g transform="rotate(0.06 127.20 371.90)"><text x="127.20" y="371.90" font-family="Liberation Sans" font-weight="bold" font-size="8" fill="#1ec3f2" stroke="#1ec3f2" stroke-width="0.15" textLength="18.4" lengthAdjust="spacingAndGlyphs">81416</text></g>
<g transform="rotate(0.06 400.70 289.20)"><text x="400.70" y="289.20" font-family="Liberation Sans" font-weight="bold" font-size="8" fill="#1ec3f2" stroke="#1ec3f2" stroke-width="0.15" textLength="18.4" lengthAdjust="spacingAndGlyphs">81419</text></g>
<g transform="rotate(0.06 504.60 212.90)"><text x="504.60" y="212.90" font-family="Liberation Sans" font-weight="bold" font-size="8" fill="#1ec3f2" stroke="#1ec3f2" stroke-width="0.15" textLength="18.4" lengthAdjust="spacingAndGlyphs">81428</text></g>
<g transform="rotate(0.06 457.60 428.90)"><text x="457.60" y="428.90" font-family="Liberation Sans" font-weight="bold" font-size="8" fill="#1ec3f2" stroke="#1ec3f2" stroke-width="0.15" textLength="18.4" lengthAdjust="spacingAndGlyphs">81415</text></g>
<g transform="rotate(0.06 148 189.8)"><text x="148" y="189.8" text-anchor="middle" font-family="Liberation Sans" font-size="10.2" fill="#b4b4b4">MESA</text></g>
<g transform="rotate(0.06 333 348.5)"><text x="333" y="348.5" text-anchor="middle" font-family="Liberation Sans" font-size="10.2" fill="#b4b4b4">DELTA</text></g>
<g transform="rotate(0.06 573.5 230.5)"><text x="573.5" y="230.5" text-anchor="middle" font-family="Liberation Sans" font-size="6" fill="#b4b4b4">GUNNISON</text></g>
<g transform="rotate(0.06 301.2 435.6)"><text x="301.2" y="435.6" text-anchor="middle" font-family="Liberation Sans" font-size="5.8" fill="#a8a8a8">MONTROSE</text></g>
<path d="M5,16 H597.6 V439.2 H5 Z M7.5,18.3 V436.9 H595.2 V18.3 Z" fill="#bdbdbd" fill-rule="evenodd"/><rect x="0" y="439.4" width="600" height="0.6" fill="#fff"/>
<rect x="5" y="0" width="547.5" height="14.8" fill="#6894d8"/><rect x="5" y="0" width="547.5" height="1.6" fill="#7ba6de"/><rect x="5" y="13.8" width="547.5" height="1" fill="#7aa2dc"/>
<g transform="rotate(0.06 7 9.95)"><text x="7" y="9.95" font-family="Liberation Sans" font-weight="bold" font-size="6.6" fill="#fff" textLength="57" lengthAdjust="spacingAndGlyphs">DELTA COUNTY, CO</text></g>
<g transform="rotate(0.06 546 12.8)"><text x="546" y="12.8" font-family="Liberation Sans" font-weight="bold" font-size="3.4" fill="#e8eef8" text-anchor="end" textLength="56" lengthAdjust="spacingAndGlyphs">2022 ZIP Code ColorCast Edition</text></g>
<path d="M560,2.6 C556,2.8 554.6,4.4 555.6,5.6 C556.4,6.4 558,6.2 559,5.8" fill="none" stroke="#222" stroke-width="0.9"/>
<path d="M562,2.4 C565,2.2 566.5,3.2 565.6,4.4" fill="none" stroke="#222" stroke-width="0.6"/>
<g transform="rotate(0.06 557.2 8.9)"><text x="557.2" y="8.9" font-family="Liberation Sans" font-weight="bold" font-style="italic" font-size="9" fill="#e8483a" textLength="8" lengthAdjust="spacingAndGlyphs">M</text></g>
<g transform="rotate(0.06 565.2 6.9)"><text x="565.2" y="6.9" font-family="Liberation Serif" font-size="3.6" fill="#444" textLength="10" lengthAdjust="spacingAndGlyphs">arket</text></g>
<g transform="rotate(0.06 572 10.5)"><text x="572" y="10.5" font-family="Liberation Sans" font-weight="bold" font-size="4.2" fill="#e83030" textLength="11" lengthAdjust="spacingAndGlyphs">MAPS</text></g>
<path d="M558,9.5 L562,8.2 L566,8.6 L568,7.6 M559,10.6 L563,9.6 L567,10" fill="none" stroke="#9090d0" stroke-width="0.6" opacity="0.8"/>
<rect x="567" y="11.3" width="15" height="0.5" fill="#999"/><rect x="555" y="13.1" width="28" height="0.5" fill="#aaa"/>
<rect x="583.6" y="1.8" width="13.5" height="4.2" fill="#dadada"/><rect x="583.6" y="6.3" width="13.5" height="4" fill="#dedede"/><rect x="583.6" y="10.6" width="13.5" height="2.6" fill="#e2e2e2"/>
<g transform="rotate(0.06 584.2 5.1)"><text x="584.2" y="5.1" font-family="Liberation Sans" font-size="2.8" fill="#555" textLength="9.5" lengthAdjust="spacingAndGlyphs">SUASH</text></g>
<g transform="rotate(0.06 584.2 9.2)"><text x="584.2" y="9.2" font-family="Liberation Sans" font-size="2.8" fill="#555" textLength="11.5" lengthAdjust="spacingAndGlyphs">Wallmaps</text></g>
<rect x="584.2" y="11.4" width="4" height="1" fill="#aaa"/>
<rect x="36.4" y="16.4" width="1.2" height="1.4" fill="#555"/>
<rect x="36.4" y="437.2" width="1.2" height="1.6" fill="#555"/>
<rect x="65.7" y="16.4" width="1.2" height="1.4" fill="#fff"/>
<rect x="65.7" y="437.2" width="1.2" height="1.6" fill="#fff"/>
<rect x="95.0" y="16.4" width="1.2" height="1.4" fill="#555"/>
<rect x="95.0" y="437.2" width="1.2" height="1.6" fill="#555"/>
<rect x="124.3" y="16.4" width="1.2" height="1.4" fill="#fff"/>
<rect x="124.3" y="437.2" width="1.2" height="1.6" fill="#fff"/>
<rect x="153.6" y="16.4" width="1.2" height="1.4" fill="#555"/>
<rect x="153.6" y="437.2" width="1.2" height="1.6" fill="#555"/>
<rect x="182.9" y="16.4" width="1.2" height="1.4" fill="#fff"/>
<rect x="182.9" y="437.2" width="1.2" height="1.6" fill="#fff"/>
<rect x="212.2" y="16.4" width="1.2" height="1.4" fill="#555"/>
<rect x="212.2" y="437.2" width="1.2" height="1.6" fill="#555"/>
<rect x="241.5" y="16.4" width="1.2" height="1.4" fill="#fff"/>
<rect x="241.5" y="437.2" width="1.2" height="1.6" fill="#fff"/>
<rect x="270.8" y="16.4" width="1.2" height="1.4" fill="#555"/>
<rect x="270.8" y="437.2" width="1.2" height="1.6" fill="#555"/>
<rect x="300.1" y="16.4" width="1.2" height="1.4" fill="#fff"/>
<rect x="300.1" y="437.2" width="1.2" height="1.6" fill="#fff"/>
<rect x="329.4" y="16.4" width="1.2" height="1.4" fill="#555"/>
<rect x="329.4" y="437.2" width="1.2" height="1.6" fill="#555"/>
<rect x="358.7" y="16.4" width="1.2" height="1.4" fill="#fff"/>
<rect x="358.7" y="437.2" width="1.2" height="1.6" fill="#fff"/>
<rect x="388.0" y="16.4" width="1.2" height="1.4" fill="#555"/>
<rect x="388.0" y="437.2" width="1.2" height="1.6" fill="#555"/>
<rect x="417.3" y="16.4" width="1.2" height="1.4" fill="#fff"/>
<rect x="417.3" y="437.2" width="1.2" height="1.6" fill="#fff"/>
<rect x="446.6" y="16.4" width="1.2" height="1.4" fill="#555"/>
<rect x="446.6" y="437.2" width="1.2" height="1.6" fill="#555"/>
<rect x="475.9" y="16.4" width="1.2" height="1.4" fill="#fff"/>
<rect x="475.9" y="437.2" width="1.2" height="1.6" fill="#fff"/>
<rect x="505.2" y="16.4" width="1.2" height="1.4" fill="#555"/>
<rect x="505.2" y="437.2" width="1.2" height="1.6" fill="#555"/>
<rect x="534.5" y="16.4" width="1.2" height="1.4" fill="#fff"/>
<rect x="534.5" y="437.2" width="1.2" height="1.6" fill="#fff"/>
<rect x="563.8" y="16.4" width="1.2" height="1.4" fill="#555"/>
<rect x="563.8" y="437.2" width="1.2" height="1.6" fill="#555"/>
<rect x="593.1" y="16.4" width="1.2" height="1.4" fill="#fff"/>
<rect x="593.1" y="437.2" width="1.2" height="1.6" fill="#fff"/>
<rect x="5.3" y="47.4" width="1.6" height="1.2" fill="#fff"/>
<rect x="595.6" y="47.4" width="1.6" height="1.2" fill="#fff"/>
<rect x="5.3" y="77.1" width="1.6" height="1.2" fill="#555"/>
<rect x="595.6" y="77.1" width="1.6" height="1.2" fill="#555"/>
<rect x="5.3" y="106.8" width="1.6" height="1.2" fill="#fff"/>
<rect x="595.6" y="106.8" width="1.6" height="1.2" fill="#fff"/>
<rect x="5.3" y="136.5" width="1.6" height="1.2" fill="#555"/>
<rect x="595.6" y="136.5" width="1.6" height="1.2" fill="#555"/>
<rect x="5.3" y="166.2" width="1.6" height="1.2" fill="#fff"/>
<rect x="595.6" y="166.2" width="1.6" height="1.2" fill="#fff"/>
<rect x="5.3" y="195.9" width="1.6" height="1.2" fill="#555"/>
<rect x="595.6" y="195.9" width="1.6" height="1.2" fill="#555"/>
<rect x="5.3" y="225.6" width="1.6" height="1.2" fill="#fff"/>
<rect x="595.6" y="225.6" width="1.6" height="1.2" fill="#fff"/>
<rect x="5.3" y="255.3" width="1.6" height="1.2" fill="#555"/>
<rect x="595.6" y="255.3" width="1.6" height="1.2" fill="#555"/>
<rect x="5.3" y="285.0" width="1.6" height="1.2" fill="#fff"/>
<rect x="595.6" y="285.0" width="1.6" height="1.2" fill="#fff"/>
<rect x="5.3" y="314.7" width="1.6" height="1.2" fill="#555"/>
<rect x="595.6" y="314.7" width="1.6" height="1.2" fill="#555"/>
<rect x="5.3" y="344.4" width="1.6" height="1.2" fill="#fff"/>
<rect x="595.6" y="344.4" width="1.6" height="1.2" fill="#fff"/>
<rect x="5.3" y="374.1" width="1.6" height="1.2" fill="#555"/>
<rect x="595.6" y="374.1" width="1.6" height="1.2" fill="#555"/>
<rect x="5.3" y="403.8" width="1.6" height="1.2" fill="#fff"/>
<rect x="595.6" y="403.8" width="1.6" height="1.2" fill="#fff"/>
<rect x="7.6" y="18.3" width="147.3" height="98.1" fill="#fefdd9"/>
<path d="M31.5,47 L31.5,97.8" fill="none" stroke="#d6d2b4" stroke-width="0.4" stroke-linejoin="round" stroke-dasharray="6 1.2"/>
<path d="M36.8,28 L36.8,110" fill="none" stroke="#d6d2b4" stroke-width="0.4" stroke-linejoin="round" stroke-dasharray="6 1.2"/>
<path d="M46.4,40 L46.4,110" fill="none" stroke="#d6d2b4" stroke-width="0.4" stroke-linejoin="round" stroke-dasharray="6 1.2"/>
<path d="M51.7,38.3 L51.7,113.5" fill="none" stroke="#d6d2b4" stroke-width="0.4" stroke-linejoin="round" stroke-dasharray="6 1.2"/>
<path d="M63,89 L63,113.5" fill="none" stroke="#d6d2b4" stroke-width="0.4" stroke-linejoin="round" stroke-dasharray="6 1.2"/>
<path d="M70.9,66 L70.9,110" fill="none" stroke="#d6d2b4" stroke-width="0.4" stroke-linejoin="round" stroke-dasharray="6 1.2"/>
<path d="M75.3,78.5 L75.3,113.5" fill="none" stroke="#d6d2b4" stroke-width="0.4" stroke-linejoin="round" stroke-dasharray="6 1.2"/>
<path d="M81.4,78.5 L81.4,110" fill="none" stroke="#d6d2b4" stroke-width="0.4" stroke-linejoin="round" stroke-dasharray="6 1.2"/>
<path d="M123.9,38.3 L123.9,51.2" fill="none" stroke="#d6d2b4" stroke-width="0.4" stroke-linejoin="round" stroke-dasharray="6 1.2"/>
<path d="M99.3,37 L99.3,48" fill="none" stroke="#d6d2b4" stroke-width="0.4" stroke-linejoin="round" stroke-dasharray="6 1.2"/>
<path d="M140,55 L140,75" fill="none" stroke="#d6d2b4" stroke-width="0.4" stroke-linejoin="round" stroke-dasharray="6 1.2"/>
<path d="M110,70 L110,100" fill="none" stroke="#d6d2b4" stroke-width="0.4" stroke-linejoin="round" stroke-dasharray="6 1.2"/>
<path d="M57.8,45.3 L148.4,45.3" fill="none" stroke="#d6d2b4" stroke-width="0.4" stroke-linejoin="round" stroke-dasharray="6 1.2"/>
<path d="M41.2,53.1 L148.4,53.1" fill="none" stroke="#d6d2b4" stroke-width="0.4" stroke-linejoin="round" stroke-dasharray="6 1.2"/>
<path d="M7.6,66.3 L42,66.3" fill="none" stroke="#d6d2b4" stroke-width="0.4" stroke-linejoin="round" stroke-dasharray="6 1.2"/>
<path d="M17.5,71.5 L42,71.5" fill="none" stroke="#d6d2b4" stroke-width="0.4" stroke-linejoin="round" stroke-dasharray="6 1.2"/>
<path d="M63,65.4 L148.4,65.4" fill="none" stroke="#d6d2b4" stroke-width="0.4" stroke-linejoin="round" stroke-dasharray="6 1.2"/>
<path d="M66,71.5 L148.4,71.5" fill="none" stroke="#d6d2b4" stroke-width="0.4" stroke-linejoin="round" stroke-dasharray="6 1.2"/>
<path d="M74.8,79.6 L148.4,79.6" fill="none" stroke="#d6d2b4" stroke-width="0.4" stroke-linejoin="round" stroke-dasharray="6 1.2"/>
<path d="M61,89.9 L148.4,89.9" fill="none" stroke="#d6d2b4" stroke-width="0.4" stroke-linejoin="round" stroke-dasharray="6 1.2"/>
<path d="M90,100 L148.4,100" fill="none" stroke="#d6d2b4" stroke-width="0.4" stroke-linejoin="round" stroke-dasharray="6 1.2"/>
<path d="M25.7,21.5 L25.2,27.9 L28.3,33.1 L26.3,40 L17.5,62.8 L14,75 L15.8,82 L21,89 L41.1,111 L43,114" fill="none" stroke="#d6d2b4" stroke-width="0.45" stroke-linejoin="round" />
<path d="M26.3,29.7 L33,32.3 L36.3,39.7" fill="none" stroke="#d6d2b4" stroke-width="0.4" stroke-linejoin="round" />
<path d="M26.3,28.3 L30.3,25.7 L37,25.7 L42.3,27" fill="none" stroke="#d6d2b4" stroke-width="0.4" stroke-linejoin="round" />
<path d="M94.1,48.6 L94.1,37 L104.5,37 L104.5,48.6" fill="none" stroke="#d6d2b4" stroke-width="0.4" stroke-linejoin="round" />
<path d="M116,26.6 L116,33 L122.6,38.3 L123.9,51.2" fill="none" stroke="#d6d2b4" stroke-width="0.4" stroke-linejoin="round" />
<path d="M63,66 L68,62" fill="none" stroke="#d6d2b4" stroke-width="0.4" stroke-linejoin="round" />
<path d="M77.4,21.5 L61.3,29.2 L51.5,38.3 L41.2,42.1" fill="none" stroke="#f7c08a" stroke-width="0.9" stroke-linejoin="round" />
<path d="M21.8,85.3 L15.9,91.5 L8.1,96.4" fill="none" stroke="#f7c08a" stroke-width="0.9" stroke-linejoin="round" />
<path d="M46.3,21.5 L41.2,33.1 L40.9,40.8 L41.1,102.9 L43.2,110.6 L46.9,116.3" fill="none" stroke="#f07cc0" stroke-width="0.9" stroke-linejoin="round" />
<rect x="60.3" y="28.4" width="2" height="1.6" fill="#4a4a9a"/><rect x="14.9" y="90.7" width="2" height="1.6" fill="#4a4a9a"/>
<rect x="50.5" y="55.6" width="5" height="1.3" fill="#8a7a7a"/>
<rect x="7.6" y="18.3" width="147.3" height="3" fill="#5e90d8"/>
<rect x="9" y="19.2" width="5" height="1.2" fill="#c8d8f0"/><rect x="142" y="19.2" width="10" height="1.2" fill="#a8c0e8"/>
<rect x="7.6" y="18.3" width="147.3" height="98.1" fill="none" stroke="#c8c8b8" stroke-width="0.6"/>
<rect x="157.2" y="18.7" width="83.6" height="55.3" fill="#fff" stroke="#8a8a8a" stroke-width="0.6"/>
<rect x="157.5" y="19" width="83" height="4.8" fill="#5e90d8"/>
<g transform="rotate(0.06 157.6 22.6)"><text x="157.6" y="22.6" font-family="Liberation Sans" font-size="3.55" fill="#fff">ZIP Code Index/Grid Locator</text></g>
<g transform="rotate(0.06 157.6 27.30)"><text x="157.6" y="27.30" font-family="Liberation Sans" font-size="4.1" fill="#000">ZIP Code</text></g>
<g transform="rotate(0.06 179.2 27.30)"><text x="179.2" y="27.30" font-family="Liberation Sans" font-size="4.1" fill="#000">ZIP Name</text></g>
<g transform="rotate(0.06 209.2 27.30)"><text x="209.2" y="27.30" font-family="Liberation Sans" font-size="4.1" fill="#000">LOC</text></g>
<g transform="rotate(0.06 157.6 31.80)"><text x="157.6" y="31.80" font-family="Liberation Sans" font-size="4.1" fill="#000">81410</text></g>
<g transform="rotate(0.06 179.2 31.80)"><text x="179.2" y="31.80" font-family="Liberation Sans" font-size="4.1" fill="#000">AUSTIN</text></g>
<g transform="rotate(0.06 209.2 31.80)"><text x="209.2" y="31.80" font-family="Liberation Sans" font-size="4.1" fill="#000">E6</text></g>
<g transform="rotate(0.06 157.6 36.30)"><text x="157.6" y="36.30" font-family="Liberation Sans" font-size="4.1" fill="#000">81413</text></g>
<g transform="rotate(0.06 179.2 36.30)"><text x="179.2" y="36.30" font-family="Liberation Sans" font-size="4.1" fill="#000">CEDAREDGE</text></g>
<g transform="rotate(0.06 209.2 36.30)"><text x="209.2" y="36.30" font-family="Liberation Sans" font-size="4.1" fill="#000">F4</text></g>
<g transform="rotate(0.06 157.6 40.80)"><text x="157.6" y="40.80" font-family="Liberation Sans" font-size="4.1" fill="#000">81414</text></g>
<g transform="rotate(0.06 179.2 40.80)"><text x="179.2" y="40.80" font-family="Liberation Sans" font-size="4.1" fill="#000">CORY</text></g>
<g transform="rotate(0.06 209.2 40.80)"><text x="209.2" y="40.80" font-family="Liberation Sans" font-size="4.1" fill="#000">E6</text></g>
<g transform="rotate(0.06 157.6 45.30)"><text x="157.6" y="45.30" font-family="Liberation Sans" font-size="4.1" fill="#000">81415</text></g>
<g transform="rotate(0.06 179.2 45.30)"><text x="179.2" y="45.30" font-family="Liberation Sans" font-size="4.1" fill="#000">CRAWFORD</text></g>
<g transform="rotate(0.06 209.2 45.30)"><text x="209.2" y="45.30" font-family="Liberation Sans" font-size="4.1" fill="#000">H7</text></g>
<g transform="rotate(0.06 157.6 49.80)"><text x="157.6" y="49.80" font-family="Liberation Sans" font-size="4.1" fill="#000">81416</text></g>
<g transform="rotate(0.06 179.2 49.80)"><text x="179.2" y="49.80" font-family="Liberation Sans" font-size="4.1" fill="#000">DELTA</text></g>
<g transform="rotate(0.06 209.2 49.80)"><text x="209.2" y="49.80" font-family="Liberation Sans" font-size="4.1" fill="#000">B1</text></g>
<g transform="rotate(0.06 157.6 54.30)"><text x="157.6" y="54.30" font-family="Liberation Sans" font-size="4.1" fill="#000">81416</text></g>
<g transform="rotate(0.06 179.2 54.30)"><text x="179.2" y="54.30" font-family="Liberation Sans" font-size="4.1" fill="#000">DELTA</text></g>
<g transform="rotate(0.06 209.2 54.30)"><text x="209.2" y="54.30" font-family="Liberation Sans" font-size="4.1" fill="#000">D6</text></g>
<g transform="rotate(0.06 157.6 58.80)"><text x="157.6" y="58.80" font-family="Liberation Sans" font-size="4.1" fill="#000">81418</text></g>
<g transform="rotate(0.06 179.2 58.80)"><text x="179.2" y="58.80" font-family="Liberation Sans" font-size="4.1" fill="#000">ECKERT</text></g>
<g transform="rotate(0.06 209.2 58.80)"><text x="209.2" y="58.80" font-family="Liberation Sans" font-size="4.1" fill="#000">E5</text></g>
<g transform="rotate(0.06 157.6 63.30)"><text x="157.6" y="63.30" font-family="Liberation Sans" font-size="4.1" fill="#000">81419</text></g>
<g transform="rotate(0.06 179.2 63.30)"><text x="179.2" y="63.30" font-family="Liberation Sans" font-size="4.1" fill="#000">HOTCHKISS</text></g>
<g transform="rotate(0.06 209.2 63.30)"><text x="209.2" y="63.30" font-family="Liberation Sans" font-size="4.1" fill="#000">G5</text></g>
<g transform="rotate(0.06 157.6 67.80)"><text x="157.6" y="67.80" font-family="Liberation Sans" font-size="4.1" fill="#000">81420</text></g>
<g transform="rotate(0.06 179.2 67.80)"><text x="179.2" y="67.80" font-family="Liberation Sans" font-size="4.1" fill="#000">LAZEAR</text></g>
<g transform="rotate(0.06 209.2 67.80)"><text x="209.2" y="67.80" font-family="Liberation Sans" font-size="4.1" fill="#000">G6</text></g>
<g transform="rotate(0.06 157.6 72.30)"><text x="157.6" y="72.30" font-family="Liberation Sans" font-size="4.1" fill="#000">81428</text></g>
<g transform="rotate(0.06 179.2 72.30)"><text x="179.2" y="72.30" font-family="Liberation Sans" font-size="4.1" fill="#000">PAONIA</text></g>
<g transform="rotate(0.06 209.2 72.30)"><text x="209.2" y="72.30" font-family="Liberation Sans" font-size="4.1" fill="#000">I3</text></g>
<path d="M7.5,119.3 L14,118.8 L20,117.6 L26,116.4" fill="none" stroke="#f078bc" stroke-width="0.9"/>
<path d="M40,120 L43,117.8 L45,116.4" fill="none" stroke="#68d0ec" stroke-width="0.7"/>
<rect x="7.4" y="120" width="99.3" height="58.4" fill="#fff" stroke="#9a9a9a" stroke-width="0.5"/>
<rect x="7.6" y="120.2" width="98.9" height="2.6" fill="#5e90d8"/>
<rect x="40" y="120.8" width="30" height="1.3" fill="#b8cdee"/>
<g transform="rotate(0.06 8.5 126.90)"><text x="8.5" y="126.90" font-family="Liberation Sans" font-size="2.3" fill="#333" stroke="#333" stroke-width="0.06">State</text></g>
<line x1="30.1" y1="126.10" x2="56.7" y2="126.10" stroke="#b4f2bc" stroke-width="1.4"/>
<g transform="rotate(0.06 8.5 132.38)"><text x="8.5" y="132.38" font-family="Liberation Sans" font-size="2.3" fill="#333" stroke="#333" stroke-width="0.06">County</text></g>
<line x1="30.1" y1="131.58" x2="56.7" y2="131.58" stroke="#8a8a8a" stroke-width="0.5"/>
<g transform="rotate(0.06 8.5 137.86)"><text x="8.5" y="137.86" font-family="Liberation Sans" font-size="2.3" fill="#333" stroke="#333" stroke-width="0.06">ZIP Code</text></g>
<line x1="30.1" y1="137.06" x2="56.7" y2="137.06" stroke="#bfe8f8" stroke-width="1.4"/>
<g transform="rotate(0.06 8.5 143.34)"><text x="8.5" y="143.34" font-family="Liberation Sans" font-size="2.3" fill="#333" stroke="#333" stroke-width="0.06">Primary Streets</text></g>
<line x1="30.1" y1="142.54" x2="56.7" y2="142.54" stroke="#f0ecec" stroke-width="0.5"/>
<g transform="rotate(0.06 8.5 148.82)"><text x="8.5" y="148.82" font-family="Liberation Sans" font-size="2.3" fill="#333" stroke="#333" stroke-width="0.06">Secondary Streets</text></g>
<line x1="30.1" y1="148.02" x2="56.7" y2="148.02" stroke="#f8e6ee" stroke-width="0.6"/>
<g transform="rotate(0.06 8.5 154.30)"><text x="8.5" y="154.30" font-family="Liberation Sans" font-size="2.3" fill="#333" stroke="#333" stroke-width="0.06">County Highways</text></g>
<line x1="30.1" y1="153.50" x2="56.7" y2="153.50" stroke="#d8d8d8" stroke-width="0.5"/>
<path d="M48,153.75 L56.7,153.75 L56.7,151.30 Z" fill="#d8d8d8" opacity="0.7"/>
<g transform="rotate(0.06 8.5 159.78)"><text x="8.5" y="159.78" font-family="Liberation Sans" font-size="2.3" fill="#333" stroke="#333" stroke-width="0.06">State Highways</text></g>
<line x1="30.1" y1="158.98" x2="56.7" y2="158.98" stroke="#fcd2a6" stroke-width="1.3"/>
<path d="M48,159.63 L56.7,159.63 L56.7,156.78 Z" fill="#fcd2a6" opacity="0.7"/>
<g transform="rotate(0.06 8.5 165.26)"><text x="8.5" y="165.26" font-family="Liberation Sans" font-size="2.3" fill="#333" stroke="#333" stroke-width="0.06">US Highways</text></g>
<line x1="30.1" y1="164.46" x2="56.7" y2="164.46" stroke="#ec5aa8" stroke-width="1.3"/>
<path d="M48,165.11 L56.7,165.11 L56.7,162.26 Z" fill="#ec5aa8" opacity="0.7"/>
<g transform="rotate(0.06 8.5 170.74)"><text x="8.5" y="170.74" font-family="Liberation Sans" font-size="2.3" fill="#333" stroke="#333" stroke-width="0.06">Interstate Highways</text></g>
<line x1="30.1" y1="169.94" x2="56.7" y2="169.94" stroke="#6cc8ec" stroke-width="1.3"/>
<path d="M48,170.59 L56.7,170.59 L56.7,167.74 Z" fill="#6cc8ec" opacity="0.7"/>
<g transform="rotate(0.06 8.5 176.22)"><text x="8.5" y="176.22" font-family="Liberation Sans" font-size="2.3" fill="#333" stroke="#333" stroke-width="0.06">Toll Roads</text></g>
<line x1="30.1" y1="175.42" x2="56.7" y2="175.42" stroke="#50d050" stroke-width="1.3"/>
<path d="M48,176.07 L56.7,176.07 L56.7,173.22 Z" fill="#50d050" opacity="0.7"/>
<circle cx="37" cy="153.6" r="0.9" fill="#777"/>
<circle cx="37" cy="159" r="0.9" fill="#a09080"/>
<circle cx="37" cy="164.5" r="0.9" fill="#f0a0c0"/>
<circle cx="37" cy="169.9" r="0.9" fill="#7050a0"/>
<g transform="rotate(0.06 59.35 124.85)"><text x="59.35" y="124.85" font-family="Liberation Sans" font-size="2.1" fill="#111" stroke="#111" stroke-width="0.08">Urbanized Towns</text></g>
<g transform="rotate(0.06 59.35 129.29)"><text x="59.35" y="129.29" font-family="Liberation Sans" font-size="2.1" fill="#111" stroke="#111" stroke-width="0.08">Cities 100,000 and Above</text></g>
<g transform="rotate(0.06 59.35 133.73)"><text x="59.35" y="133.73" font-family="Liberation Sans" font-size="2.1" fill="#111" stroke="#111" stroke-width="0.08">Cities 50,000 - 99,999</text></g>
<g transform="rotate(0.06 59.35 138.17)"><text x="59.35" y="138.17" font-family="Liberation Sans" font-size="2.1" fill="#111" stroke="#111" stroke-width="0.08">Cities 25,000 - 49,999</text></g>
<g transform="rotate(0.06 59.35 142.61)"><text x="59.35" y="142.61" font-family="Liberation Sans" font-size="2.1" fill="#111" stroke="#111" stroke-width="0.08">Cities 5,000 - 24,999</text></g>
<g transform="rotate(0.06 59.35 147.05)"><text x="59.35" y="147.05" font-family="Liberation Sans" font-size="2.1" fill="#111" stroke="#111" stroke-width="0.08">Cities 0 - 4,999 and Below</text></g>
<g transform="rotate(0.06 84 130)"><text x="84" y="130" font-family="Liberation Serif" font-style="italic" font-weight="bold" font-size="6.2" fill="#222" textLength="12" lengthAdjust="spacingAndGlyphs" transform="rotate(8 84 130)">City</text></g>
<g transform="rotate(0.06 84 134)"><text x="84" y="134" font-family="Liberation Serif" font-style="italic" font-weight="bold" font-size="4.6" fill="#222" textLength="8.7" lengthAdjust="spacingAndGlyphs" transform="rotate(8 84 134)">City</text></g>
<g transform="rotate(0.06 84.2 138)"><text x="84.2" y="138" font-family="Liberation Serif" font-style="italic" font-weight="bold" font-size="3.2" fill="#222" textLength="6" lengthAdjust="spacingAndGlyphs" transform="rotate(8 84.2 138)">City</text></g>
<g transform="rotate(0.06 84.5 142.3)"><text x="84.5" y="142.3" font-family="Liberation Serif" font-style="italic" font-weight="bold" font-size="2.4" fill="#222" textLength="3.2" lengthAdjust="spacingAndGlyphs" transform="rotate(8 84.5 142.3)">City</text></g>
<g transform="rotate(0.06 85 146.7)"><text x="85" y="146.7" font-family="Liberation Serif" font-style="italic" font-weight="bold" font-size="2" fill="#222" textLength="2.2" lengthAdjust="spacingAndGlyphs" transform="rotate(8 85 146.7)">City</text></g>
<path d="M60.2,160 L103,160 M60.2,158.8 L60.2,161 M81.6,159 L81.6,161 M103,158.8 L103,161" stroke="#7f8fc0" stroke-width="0.7" fill="none"/>
<path d="M68.3,167 L94.9,167 M68.3,165.8 L68.3,168 M81.6,166 L81.6,168 M94.9,165.8 L94.9,168" stroke="#7f8fc0" stroke-width="0.7" fill="none"/>
<g transform="rotate(0.06 81.6 159)"><text x="81.6" y="159" font-family="Liberation Sans" font-size="2.2" fill="#666" text-anchor="middle">Miles</text></g>
<g transform="rotate(0.06 81.6 166)"><text x="81.6" y="166" font-family="Liberation Sans" font-size="2.2" fill="#666" text-anchor="middle">Kilometers</text></g>
<rect x="8" y="178.6" width="98.7" height="0.7" fill="#d0d0d0"/><rect x="90" y="176.6" width="13" height="0.8" fill="#c8c8c8"/>
<path d="M23.00,180.10 L23.90,186.26 L23.00,189.10 L22.10,186.26 Z M23.00,202.90 L22.10,196.52 L23.00,193.50 L23.90,196.52 Z M11.10,191.30 L17.64,190.40 L20.80,191.30 L17.64,192.20 Z M34.60,191.30 L28.22,192.20 L25.20,191.30 L28.22,190.40 Z M18.20,186.20 L21.42,188.46 L21.49,189.70 L20.26,189.55 Z M28.10,186.20 L25.86,189.57 L24.56,189.74 L24.73,188.44 Z M18.20,196.50 L20.25,193.10 L21.51,192.92 L21.43,194.18 Z M28.10,196.30 L24.73,194.12 L24.57,192.84 L25.86,192.98 Z" fill="#111"/>
</svg>
</body></html>
